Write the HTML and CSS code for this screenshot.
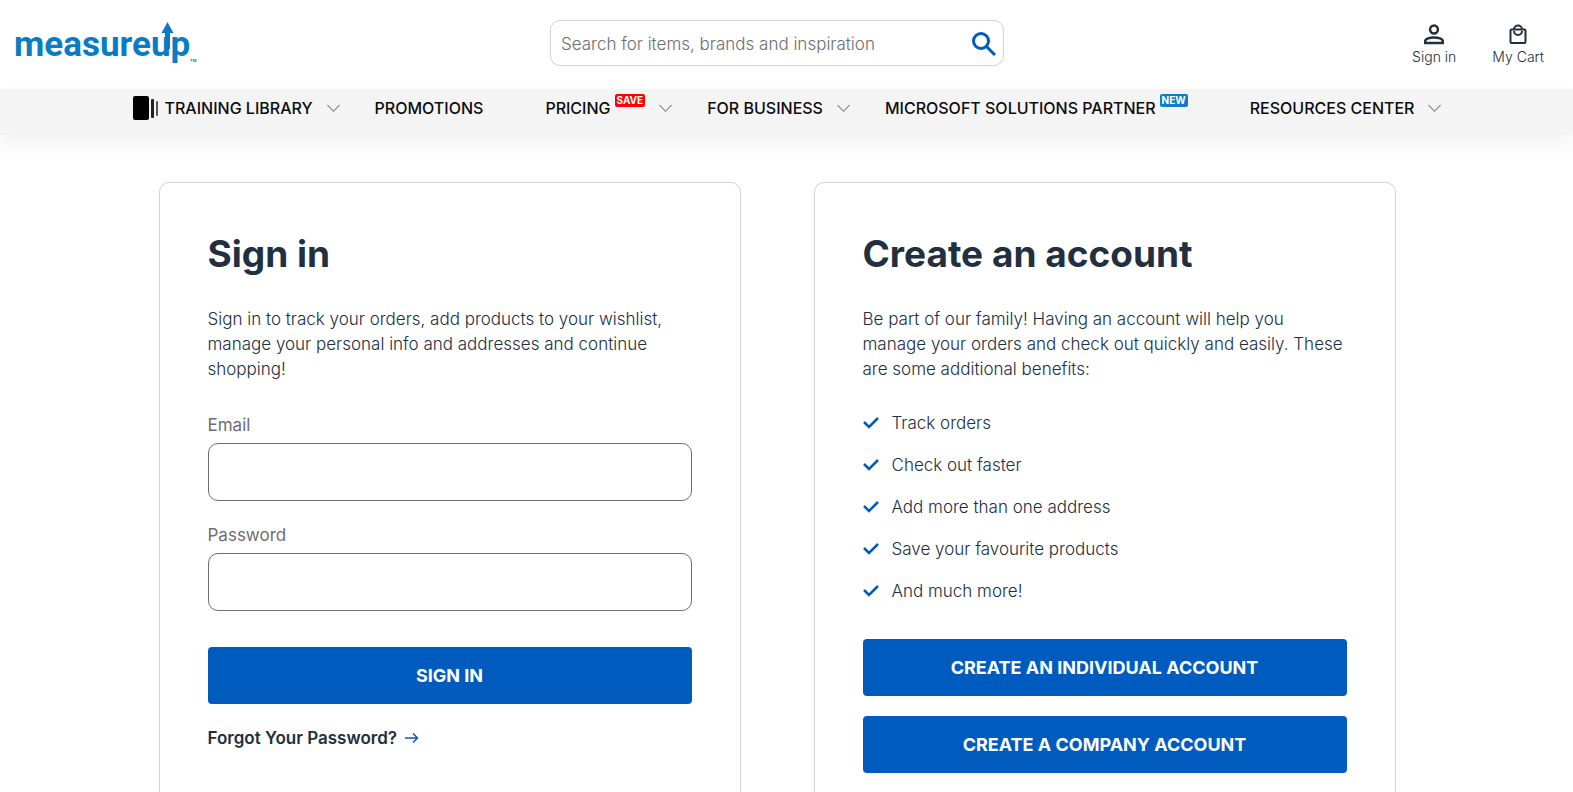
FILE: index.html
```html
<!DOCTYPE html>
<html lang="en">
<head>
<meta charset="utf-8">
<meta name="viewport" content="width=device-width, initial-scale=1">
<title>MeasureUp - Sign in</title>
<link rel="stylesheet" href="styles.css">
</head>
<body>
<header class="header">
  <a class="logo" href="#" aria-label="MeasureUp home">
    <svg width="184" height="46" viewBox="0 0 184 46">
      <text class="logo-text" x="0" y="36">measureup</text>
      <path d="M153.500 2l6 11h-3.500v16h-5V13h-3.500z" fill="#0a7cc4"/>
      <text class="logo-mark" x="176" y="42">TM</text>
    </svg>
  </a>
  <form class="search" role="search">
    <input class="search-input" type="search" aria-label="Search" placeholder="Search for items, brands and inspiration">
    <button class="search-button" type="button" aria-label="Search">
      <svg width="24" height="24" viewBox="0 0 24 24" fill="none" stroke="#005bbf" stroke-width="3"><circle cx="9" cy="9" r="7.500"/><path d="M14.500 14.500l8.500 8.500"/></svg>
    </button>
  </form>
  <div class="account-links">
    <a class="account-link" href="#">
      <svg width="24" height="24" viewBox="0 0 24 24" fill="none" stroke="#212f3f" stroke-width="2.500"><circle cx="12" cy="7.500" r="3.900"/><path d="M3.200 21v-1.700c0-2.400 4.600-3.900 8.800-3.900s8.800 1.500 8.800 3.900V21z"/></svg>
      Sign in
    </a>
    <a class="account-link" href="#">
      <svg width="24" height="24" viewBox="0 0 24 24" fill="none" stroke="#212f3f" stroke-width="2"><rect x="4.500" y="7.500" width="15" height="13.500" rx="1"/><path d="M8 7.500a4 4 0 0 1 8 0M8 9a4 4 0 0 0 8 0"/></svg>
      My Cart
    </a>
  </div>
</header>
<nav class="nav">
  <ul class="nav-list">
    <li><a class="nav-link" href="#">
      <svg class="nav-books" width="26" height="26" viewBox="0 0 26 26"><rect x="0" y="1" width="16" height="24" rx="2"/><rect x="18" y="4" width="3" height="19" rx="1" fill="#222"/><rect x="23" y="6" width="2" height="15" rx="1" fill="#555"/></svg>
      <span>TRAINING LIBRARY</span><span class="chevron"></span></a></li>
    <li><a class="nav-link" href="#"><span>PROMOTIONS</span><span class="chevron-slot"></span></a></li>
    <li><a class="nav-link" href="#"><span>PRICING</span><span class="badge badge-save">SAVE</span><span class="chevron"></span></a></li>
    <li><a class="nav-link" href="#"><span>FOR BUSINESS</span><span class="chevron"></span></a></li>
    <li><a class="nav-link" href="#"><span>MICROSOFT SOLUTIONS PARTNER</span><span class="badge badge-new">NEW</span><span class="chevron-slot"></span></a></li>
    <li><a class="nav-link" href="#"><span>RESOURCES CENTER</span><span class="chevron"></span></a></li>
  </ul>
</nav>
<div class="page">
<main class="main">
  <section class="card">
    <h1 class="title">Sign in</h1>
    <p class="intro">Sign in to track your orders, add products to your wishlist, manage your personal info and addresses and continue shopping!</p>
    <form class="form">
      <div class="field"><label class="label" for="email">Email</label><input class="input" id="email" type="email"></div>
      <div class="field"><label class="label" for="password">Password</label><input class="input" id="password" type="password"></div>
      <button class="button" type="button">SIGN IN</button>
    </form>
    <a class="forgot" href="#">Forgot Your Password?
      <svg width="14" height="12" viewBox="0 0 14 12" fill="none" stroke="#005bbf" stroke-width="1.500"><path d="M0 6h12.500M8 1.500L12.500 6 8 10.500"/></svg>
    </a>
  </section>
  <section class="card">
    <h2 class="title">Create an account</h2>
    <p class="intro">Be part of our family! Having an account will help you manage your orders and check out quickly and easily. These are some additional benefits:</p>
    <ul class="benefits">
      <li class="benefit"><svg class="check" viewBox="0 0 16 14"><path d="M1 6l5 5L15 2"/></svg>Track orders</li>
      <li class="benefit"><svg class="check" viewBox="0 0 16 14"><path d="M1 6l5 5L15 2"/></svg>Check out faster</li>
      <li class="benefit"><svg class="check" viewBox="0 0 16 14"><path d="M1 6l5 5L15 2"/></svg>Add more than one address</li>
      <li class="benefit"><svg class="check" viewBox="0 0 16 14"><path d="M1 6l5 5L15 2"/></svg>Save your favourite products</li>
      <li class="benefit"><svg class="check" viewBox="0 0 16 14"><path d="M1 6l5 5L15 2"/></svg>And much more!</li>
    </ul>
    <div class="actions">
      <button class="button" type="button">CREATE AN INDIVIDUAL ACCOUNT</button>
      <button class="button" type="button">CREATE A COMPANY ACCOUNT</button>
    </div>
  </section>
</main>
</div>
</body>
</html>
```
FILE: styles.css
```css
* {
  box-sizing: border-box;
}

body {
  margin: 0;
  background: #fff;
  color: #212f3f;
  font-family: Inter, "Liberation Sans", sans-serif;
  font-size: 17px;
  font-weight: 300;
}

a {
  color: inherit;
  text-decoration: none;
}

ul {
  list-style: none;
  margin: 0;
  padding: 0;
}

svg {
  flex: none;
}

.header {
  display: grid;
  grid-template-columns: 1fr minmax(200px, 454px) 1fr;
  padding: 20px 29px 21px 10px;
}

.logo {
  padding-left: 4px;
}

.logo svg {
  display: block;
}

.logo-text {
  font-family: Roboto, sans-serif;
  font-size: 35px;
  font-weight: 700;
  fill: #0a7cc4;
}

.logo-mark {
  font-size: 4px;
  font-weight: 700;
  fill: #0a7cc4;
}

.search {
  display: flex;
  align-items: center;
  height: 46px;
  padding: 0 7px 0 10px;
  border: 1px solid #d2d2d4;
  border-radius: 10px;
}

.search-input {
  flex: 1;
  min-width: 0;
  border: 0;
  outline: 0;
  padding: 2px 0 0;
  background: none;
  font: inherit;
}

.search-input::placeholder {
  color: #6e6e70;
}

.search-button {
  display: flex;
  border: 0;
  padding: 2px 0 0;
  background: none;
}

.account-links {
  display: flex;
  justify-content: flex-end;
  gap: 36px;
}

.account-link {
  display: flex;
  flex-direction: column;
  align-items: center;
  padding-top: 2px;
  font-size: 14px;
  line-height: 22px;
}

.nav {
  background: #f4f4f4;
  height: 46px;
  box-shadow: 0 10px 20px rgba(0, 0, 0, 0.05);
}

.nav-list {
  display: flex;
  justify-content: center;
  gap: 36px;
  padding-top: 5px;
}

.nav-link {
  display: flex;
  align-items: center;
  height: 28px;
  color: #0c0c0c;
  font-size: 16px;
  font-weight: 500;
  white-space: nowrap;
}

.nav-books {
  margin-right: 6px;
}

.badge {
  align-self: flex-start;
  height: 13px;
  margin-left: 4px;
  padding: 0 2px;
  border-radius: 2px;
  color: #fff;
  font-size: 10px;
  font-weight: 700;
  line-height: 13px;
}

.badge-save {
  background: #f00;
}

.badge-new {
  background: #0f7dc4;
}

.chevron,
.chevron-slot {
  display: flex;
  justify-content: center;
  width: 11px;
  margin-left: 15px;
}

.chevron::before {
  content: "";
  width: 8px;
  height: 8px;
  margin-bottom: 5px;
  border: solid #777;
  border-width: 0 1px 1px 0;
  transform: rotate(45deg);
}

.page {
  padding-right: 19px;
}

.main {
  display: grid;
  grid-template-columns: 1fr 1fr;
  gap: 73px;
  max-width: 1237px;
  margin: 0 auto;
  padding-top: 47px;
}

.card {
  padding: 47px 48px 48px;
  border: 1px solid #d2d2d4;
  border-radius: 10px;
}

.title {
  margin: 0 0 29px;
  font-size: 37px;
  font-weight: 700;
  line-height: 48px;
}

.intro {
  margin: 0;
  line-height: 25px;
}

.form {
  display: flex;
  flex-direction: column;
  padding-top: 31px;
}

.field {
  display: flex;
  flex-direction: column;
  gap: 6px;
  margin-bottom: 22px;
}

.label {
  color: #6e6e70;
  font-weight: 400;
  line-height: 24px;
}

.input {
  width: 100%;
  height: 58px;
  padding: 0 16px;
  border: 1px solid #6e6e70;
  border-radius: 10px;
  background: #fff;
  font: inherit;
}

.button {
  width: 100%;
  height: 57px;
  border: 0;
  border-radius: 4px;
  background: #005bbf;
  color: #fff;
  font: inherit;
  font-size: 18px;
  font-weight: 700;
}

.form .button {
  margin-top: 14px;
}

.forgot {
  display: inline-flex;
  align-items: center;
  gap: 8px;
  margin-top: 22px;
  font-weight: 600;
  line-height: 24px;
}

.benefits {
  display: flex;
  flex-direction: column;
  gap: 18px;
  padding: 29px 0 36px;
}

.benefit {
  display: flex;
  align-items: center;
  gap: 13px;
  line-height: 24px;
}

.check {
  width: 16px;
  height: 14px;
  fill: none;
  stroke: #005bbf;
  stroke-width: 2.500px;
}

.actions {
  display: flex;
  flex-direction: column;
  gap: 20px;
}
```
